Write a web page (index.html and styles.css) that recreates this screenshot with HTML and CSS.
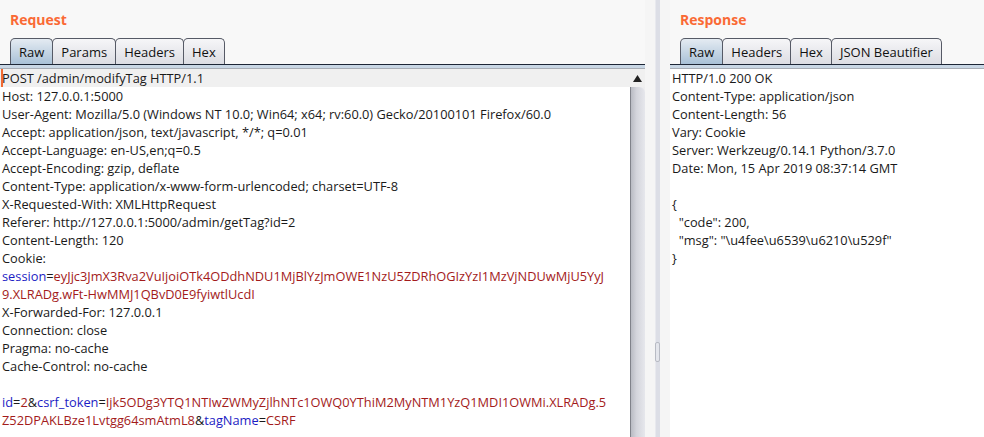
FILE: index.html
```html
<!DOCTYPE html>
<html lang="en">
<head>
  <meta charset="UTF-8" />
  <title>Request / Response</title>
  <link rel="stylesheet" href="styles.css">
</head>
<body>
  <div class="app">
    <div class="pane request">
      <h2 class="pane-title">Request</h2>
      <div class="tabs">
        <div class="tab active">Raw</div>
        <div class="tab">Params</div>
        <div class="tab">Headers</div>
        <div class="tab">Hex</div>
      </div>
      <div class="editor">
        <div class="text">
          <div class="line current"><span class="caret"></span>POST /admin/modifyTag HTTP/1.1</div>
          <div class="line">Host: 127.0.0.1:5000</div>
          <div class="line">User-Agent: Mozilla/5.0 (Windows NT 10.0; Win64; x64; rv:60.0) Gecko/20100101 Firefox/60.0</div>
          <div class="line">Accept: application/json, text/javascript, */*; q=0.01</div>
          <div class="line">Accept-Language: en-US,en;q=0.5</div>
          <div class="line">Accept-Encoding: gzip, deflate</div>
          <div class="line">Content-Type: application/x-www-form-urlencoded; charset=UTF-8</div>
          <div class="line">X-Requested-With: XMLHttpRequest</div>
          <div class="line">Referer: http://127.0.0.1:5000/admin/getTag?id=2</div>
          <div class="line">Content-Length: 120</div>
          <div class="line">Cookie:</div>
          <div class="line"><span class="key">session</span>=<span class="val">eyJjc3JmX3Rva2VuIjoiOTk4ODdhNDU1MjBlYzJmOWE1NzU5ZDRhOGIzYzI1MzVjNDUwMjU5YyJ</span></div>
          <div class="line"><span class="val">9.XLRADg.wFt-HwMMJ1QBvD0E9fyiwtlUcdI</span></div>
          <div class="line">X-Forwarded-For: 127.0.0.1</div>
          <div class="line">Connection: close</div>
          <div class="line">Pragma: no-cache</div>
          <div class="line">Cache-Control: no-cache</div>
          <div class="line">&nbsp;</div>
          <div class="line"><span class="key">id</span>=<span class="val">2</span>&amp;<span class="key">csrf_token</span>=<span class="val">Ijk5ODg3YTQ1NTIwZWMyZjlhNTc1OWQ0YThiM2MyNTM1YzQ1MDI1OWMi.XLRADg.5</span></div>
          <div class="line"><span class="val">Z52DPAKLBze1Lvtgg64smAtmL8</span>&amp;<span class="key">tagName</span>=<span class="val">CSRF</span></div>
        </div>
        <div class="scrollbar">
          <div class="scroll-up">
            <svg width="9" height="7" viewBox="0 0 9 7"><path d="M4.5 0 L9 7 L0 7 Z" fill="#222"/></svg>
          </div>
          <div class="thumb"></div>
        </div>
      </div>
    </div>

    <div class="divider">
      <div class="split-bar"><span class="grip"></span></div>
    </div>

    <div class="pane response">
      <h2 class="pane-title">Response</h2>
      <div class="tabs">
        <div class="tab active">Raw</div>
        <div class="tab">Headers</div>
        <div class="tab">Hex</div>
        <div class="tab">JSON Beautifier</div>
      </div>
      <div class="editor">
        <div class="text">
          <div class="line">HTTP/1.0 200 OK</div>
          <div class="line">Content-Type: application/json</div>
          <div class="line">Content-Length: 56</div>
          <div class="line">Vary: Cookie</div>
          <div class="line">Server: Werkzeug/0.14.1 Python/3.7.0</div>
          <div class="line">Date: Mon, 15 Apr 2019 08:37:14 GMT</div>
          <div class="line">&nbsp;</div>
          <div class="line">{</div>
          <div class="line">&nbsp;&nbsp;"code": 200,</div>
          <div class="line">&nbsp;&nbsp;"msg": "\u4fee\u6539\u6210\u529f"</div>
          <div class="line">}</div>
        </div>
      </div>
    </div>
  </div>
</body>
</html>
```

FILE: styles.css
```css
body {
  margin: 0;
  background: #f8f8f8;
  font-family: 'Open Sans', sans-serif;
  color: #1a1a1a;
  overflow: hidden;
}

.app {
  display: flex;
  height: 437px;
}

.pane {
  display: flex;
  flex-direction: column;
  min-width: 0;
}

.pane.request {
  width: 645px;
}

.pane.response {
  flex: 1;
}

.pane-title {
  margin: 0;
  height: 38px;
  padding-left: 10px;
  line-height: 40px;
  font-size: 14px;
  font-weight: bold;
  color: #fa6a35;
}

.tabs {
  display: flex;
  height: 26px;
  padding-left: 10px;
  border-bottom: 1px solid #1d2636;
}

.tab {
  padding: 0 8px;
  line-height: 26px;
  font-size: 13px;
  color: #111;
  border: 1px solid #565a66;
  border-bottom: none;
  border-radius: 5px 5px 0 0;
  margin-right: -1px;
  background: linear-gradient(#f6f6f8, #dcdde3);
}

.tab.active {
  background: linear-gradient(#e4ebf2, #a9c1d7);
}

.editor {
  flex: 1;
  display: flex;
  border-top: 3px solid #c9d7e5;
  min-height: 0;
}

.text {
  flex: 1;
  background: #fff;
  border-top: 1px solid #a8adb5;
  font-size: 12.8px;
  line-height: 18px;
  white-space: nowrap;
  overflow: hidden;
}

.line {
  padding-left: 2px;
  height: 18px;
}

.line.current {
  position: relative;
  background: #f0f0f0;
}

.caret {
  position: absolute;
  left: 1px;
  top: 0;
  width: 2px;
  height: 18px;
  background: #f26a32;
}

.key {
  color: #1c1cc4;
}

.val {
  color: #a31b1b;
}

.scrollbar {
  width: 15px;
  display: flex;
  flex-direction: column;
  background: #eeeef0;
  border-top: 1px solid #a8adb5;
}

.scroll-up {
  height: 18px;
  display: flex;
  align-items: center;
  justify-content: center;
  background: #f0f0f0;
}

.thumb {
  flex: 1;
  border-left: 1px solid #80828a;
  border-radius: 0 6px 0 0;
  background: linear-gradient(to right, #b9bbc3, #d4d5dc 40%, #e6e7ec);
}

.divider {
  width: 25px;
  display: flex;
  justify-content: center;
  background: #f5f5f5;
}

.split-bar {
  width: 4px;
  margin-left: -1px;
  position: relative;
  background: #dcdee6;
  border-left: 1px solid #e8e9ee;
}

.grip {
  position: absolute;
  left: 0;
  top: 342px;
  width: 3px;
  height: 18px;
  border: 1px solid #b8bbc4;
  border-radius: 2px;
  background: #e4e6ec;
  margin-left: -1px;
}
```
